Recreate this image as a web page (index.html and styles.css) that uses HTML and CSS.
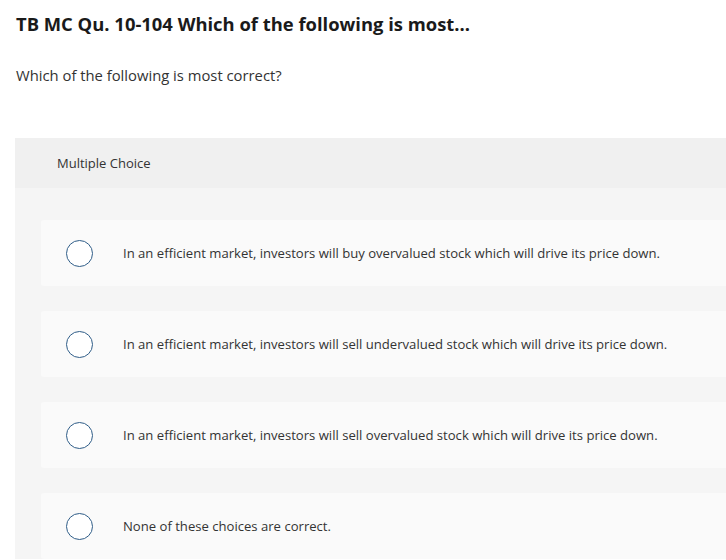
FILE: index.html
```html
<!DOCTYPE html>
<html>
<head>
<meta charset="utf-8">
<link rel="stylesheet" href="styles.css">
</head>
<body>
<div class="page">
  <h1 class="title">TB MC Qu. 10-104 Which of the following is most...</h1>
  <p class="question">Which of the following is most correct?</p>
  <div class="panel">
    <div class="panel-head">Multiple Choice</div>
    <div class="panel-body">
      <div class="option"><span class="radio"></span><span class="label">In an efficient market, investors will buy overvalued stock which will drive its price down.</span></div>
      <div class="option"><span class="radio"></span><span class="label">In an efficient market, investors will sell undervalued stock which will drive its price down.</span></div>
      <div class="option"><span class="radio"></span><span class="label">In an efficient market, investors will sell overvalued stock which will drive its price down.</span></div>
      <div class="option"><span class="radio"></span><span class="label">None of these choices are correct.</span></div>
    </div>
  </div>
</div>
</body>
</html>
```
FILE: styles.css
```css
html, body {
  margin: 0;
  padding: 0;
  background: #ffffff;
  overflow: hidden;
}
body {
  font-family: "Open Sans", Lato, sans-serif;
  color: #333333;
}
.page {
  padding: 0 0 0 15px;
}
.title {
  margin: 0;
  padding-top: 13px;
  padding-left: 1px;
  font-size: 18.4px;
  line-height: 22px;
  font-weight: 700;
  color: #1a1a1a;
}
.question {
  margin: 31px 0 0 1px;
  font-size: 14.8px;
  line-height: 18px;
  color: #333333;
}
.panel {
  margin-top: 54px;
  background: #f5f5f5;
}
.panel-head {
  background: #f0f0f0;
  height: 50px;
  display: flex;
  align-items: center;
  padding-left: 42px;
  font-size: 13px;
  color: #333333;
}
.panel-body {
  padding: 32px 0 0 26px;
  display: flex;
  flex-direction: column;
  gap: 25px;
}
.option {
  background: #fafafa;
  height: 66px;
  display: flex;
  align-items: center;
  border-radius: 3px 0 0 3px;
}
.radio {
  width: 25px;
  height: 25px;
  border: 1.5px solid #2f5d88;
  border-radius: 50%;
  margin-left: 25px;
  flex: none;
  background: #ffffff;
}
.label {
  margin-left: 30px;
  font-size: 13.1px;
  color: #333333;
}
```
